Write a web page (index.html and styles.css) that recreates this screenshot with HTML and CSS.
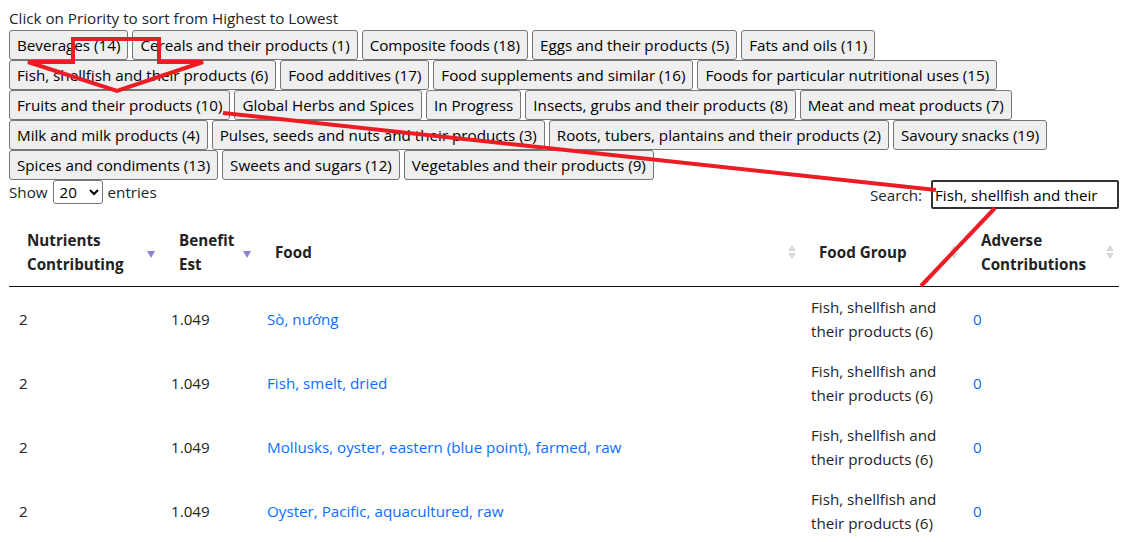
FILE: index.html
```html
<!DOCTYPE html>
<html lang="en">
<head>
    <meta charset="UTF-8">
    <meta name="viewport" content="width=device-width, initial-scale=1.0">
    <title>Food Groups</title>
    <link rel="stylesheet" href="styles.css">
</head>
<body>
    <div class="page">
        <p class="hint">Click on Priority to sort from Highest to Lowest</p>
        <div class="groups">
            <button>Beverages (14)</button>
            <button>Cereals and their products (1)</button>
            <button>Composite foods (18)</button>
            <button>Eggs and their products (5)</button>
            <button>Fats and oils (11)</button>
            <button>Fish, shellfish and their products (6)</button>
            <button>Food additives (17)</button>
            <button>Food supplements and similar (16)</button>
            <button>Foods for particular nutritional uses (15)</button>
            <button>Fruits and their products (10)</button>
            <button>Global Herbs and Spices</button>
            <button>In Progress</button>
            <button>Insects, grubs and their products (8)</button>
            <button>Meat and meat products (7)</button>
            <button>Milk and milk products (4)</button>
            <button>Pulses, seeds and nuts and their products (3)</button>
            <button>Roots, tubers, plantains and their products (2)</button>
            <button>Savoury snacks (19)</button>
            <button>Spices and condiments (13)</button>
            <button>Sweets and sugars (12)</button>
            <button>Vegetables and their products (9)</button>
        </div>
        <div class="table-tools">
            <label class="length">Show
                <select>
                    <option>10</option>
                    <option selected>20</option>
                    <option>50</option>
                </select>
                entries</label>
            <label class="filter">Search: <input type="search" value="Fish, shellfish and their products (6)"></label>
        </div>
        <table class="foods">
            <colgroup>
                <col class="c-nutr">
                <col class="c-benefit">
                <col class="c-food">
                <col class="c-group">
                <col class="c-adverse">
            </colgroup>
            <thead>
                <tr>
                    <th class="sort-desc">Nutrients Contributing</th>
                    <th class="sort-desc">Benefit Est</th>
                    <th class="sort-both">Food</th>
                    <th class="sort-both">Food Group</th>
                    <th class="sort-both">Adverse Contributions</th>
                </tr>
            </thead>
            <tbody>
                <tr>
                    <td>2</td>
                    <td>1.049</td>
                    <td><a href="#">Sò, nướng</a></td>
                    <td>Fish, shellfish and their products (6)</td>
                    <td><a href="#">0</a></td>
                </tr>
                <tr>
                    <td>2</td>
                    <td>1.049</td>
                    <td><a href="#">Fish, smelt, dried</a></td>
                    <td>Fish, shellfish and their products (6)</td>
                    <td><a href="#">0</a></td>
                </tr>
                <tr>
                    <td>2</td>
                    <td>1.049</td>
                    <td><a href="#">Mollusks, oyster, eastern (blue point), farmed, raw</a></td>
                    <td>Fish, shellfish and their products (6)</td>
                    <td><a href="#">0</a></td>
                </tr>
                <tr>
                    <td>2</td>
                    <td>1.049</td>
                    <td><a href="#">Oyster, Pacific, aquacultured, raw</a></td>
                    <td>Fish, shellfish and their products (6)</td>
                    <td><a href="#">0</a></td>
                </tr>
            </tbody>
        </table>
    </div>

    <!-- red marks drawn on top of the screenshot -->
    <svg class="marks" width="1137" height="542" viewBox="0 0 1137 542">
        <polygon points="73,39 159,39 159,62 203,62 117,91 28,62 73,62" fill="none" stroke="#ed1c24" stroke-width="4"/>
        <line x1="223" y1="113" x2="936" y2="190" stroke="#ed1c24" stroke-width="4"/>
        <line x1="995" y1="208" x2="921" y2="286" stroke="#ed1c24" stroke-width="4"/>
    </svg>
</body>
</html>
```

FILE: styles.css
```css
body {
    font-family: "Open Sans", "Noto Sans", sans-serif;
    font-size: 15.2px;
    line-height: 24px;
    color: #212529;
    background-color: white;
    margin: 0;
}
.page {
    padding: 6px 18px 0 9px;
}
.hint {
    margin: 0;
}
.groups {
    display: flex;
    flex-wrap: wrap;
    column-gap: 4px;
}
.groups button {
    font-family: inherit;
    font-size: inherit;
    line-height: 22px;
    padding: 3px 7px;
    color: black;
    background-color: #efefef;
    border: 1px solid #767676;
    border-radius: 3px;
}
.table-tools {
    display: flex;
    justify-content: space-between;
    align-items: flex-start;
}
.length,
.filter {
    display: flex;
    align-items: center;
    gap: 5px;
}
.length select {
    font-family: inherit;
    font-size: inherit;
    height: 24px;
    width: 50px;
    padding: 0 2px;
    color: black;
    border: 1px solid #767676;
    border-radius: 3px;
    background-color: white;
}
.filter {
    gap: 9px;
}
.filter input {
    font-family: inherit;
    font-size: inherit;
    width: 188px;
    height: 29px;
    box-sizing: border-box;
    padding: 0 2px;
    color: black;
    border: 2px solid #333;
    border-radius: 2px;
}
.foods {
    width: 1110px;
    margin-top: 9px;
    table-layout: fixed;
    border-collapse: collapse;
}
.c-nutr { width: 152px; }
.c-benefit { width: 96px; }
.c-food { width: 544px; }
.c-group { width: 162px; }
.c-adverse { width: 156px; }
.foods th {
    position: relative;
    padding: 10px 18px;
    text-align: left;
    font-weight: 700;
    color: #222;
    border-bottom: 1px solid #111;
}
.foods td {
    padding: 8px 10px;
    vertical-align: middle;
}
.foods a {
    color: #0d6efd;
    text-decoration: none;
}
.sort-desc::after {
    content: "";
    position: absolute;
    right: 6px;
    top: calc(50% - 1px);
    border-left: 4px solid transparent;
    border-right: 4px solid transparent;
    border-top: 7px solid #8585d6;
}
.sort-both::before,
.sort-both::after {
    content: "";
    position: absolute;
    right: 5px;
    border-left: 4px solid transparent;
    border-right: 4px solid transparent;
}
.sort-both::before {
    top: calc(50% - 7px);
    border-bottom: 6px solid #d9d9d9;
}
.sort-both::after {
    top: calc(50% + 1px);
    border-top: 6px solid #d9d9d9;
}
.marks {
    position: absolute;
    top: 0;
    left: 0;
    pointer-events: none;
}
```
